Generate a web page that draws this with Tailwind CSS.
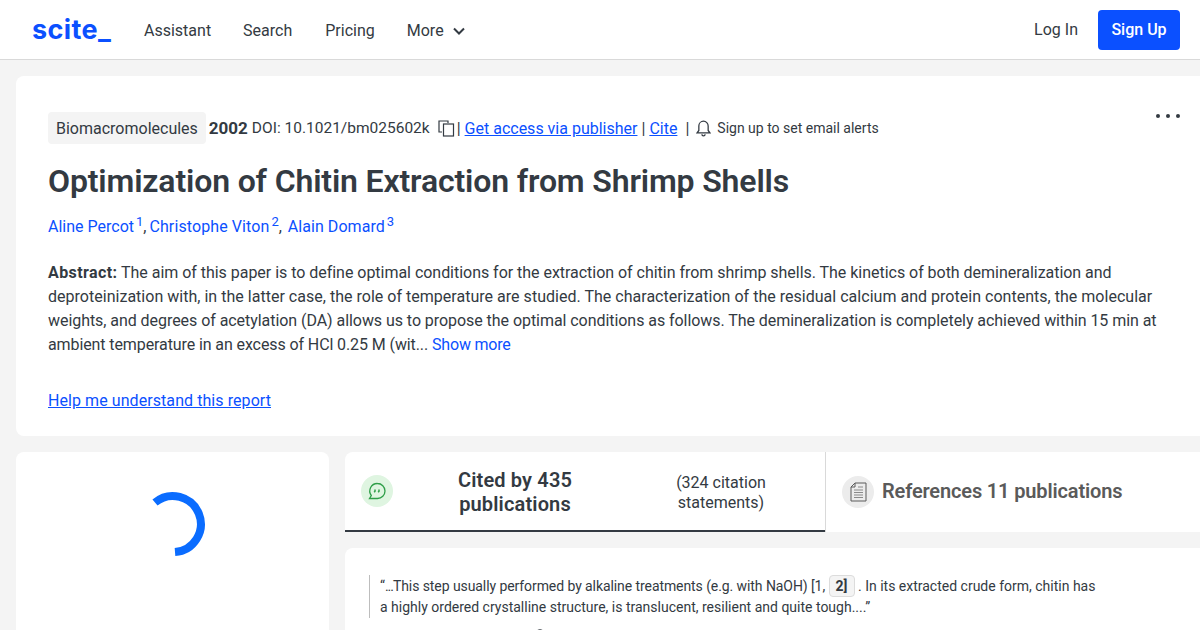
<!DOCTYPE html>
<html lang="en">
<head>
    <meta charset="UTF-8">
    <title>Optimization of Chitin Extraction from Shrimp Shells</title>
    <script src="https://cdn.jsdelivr.net/npm/@tailwindcss/browser@4"></script>
</head>
<body class="bg-[#f4f4f4] font-['Roboto','Noto_Sans',sans-serif] text-[#333a42]">
  <div class="h-[630px] overflow-hidden">
    <!-- header -->
    <header class="h-[60px] bg-white border-b border-[#d9d9d9] flex items-center pl-[32px] pr-[20px]">
        <a class="font-['Inter',sans-serif] font-bold text-[#0b50ff] text-[27px] tracking-[0.4px] w-[112px] leading-none">scite_</a>
        <nav class="flex items-center gap-[32px] text-[16px] pt-[2px]">
            <a>Assistant</a>
            <a>Search</a>
            <a class="ml-[1px]">Pricing</a>
            <a class="flex items-center gap-[9px]">More
                <svg class="w-[12px] h-[8px]" viewBox="0 0 12 8" fill="none" stroke="#333a42" stroke-width="2"><path d="M1 1.500l5 5 5-5"/></svg>
            </a>
        </nav>
        <div class="ml-auto flex items-center gap-[20px] text-[16px]">
            <a>Log In</a>
            <a class="bg-[#0b50ff] text-white font-medium rounded-[4px] h-[40px] w-[82px] flex items-center justify-center">Sign Up</a>
        </div>
    </header>

    <main class="pl-[16px] pt-[16px]">
        <!-- paper card -->
        <section class="relative bg-white rounded-l-[8px] h-[360px] px-[32px] pt-[36px]">
            <div class="flex items-center h-[32px] text-[16px] whitespace-nowrap">
                <span class="bg-[#f4f4f4] rounded-[4px] h-[32px] px-[8px] pt-[1px] flex items-center mr-[3px]">Biomacromolecules</span>
                <b class="font-bold text-[17px] mr-[4px] pt-[1px]">2002</b>
                <span class="text-[15.500px] pt-[1px]">DOI: 10.1021/bm025602k</span>
                <svg class="w-[17px] h-[17px] ml-[8px]" viewBox="0 0 17 17" fill="none" stroke="#333a42" stroke-width="1.200"><path d="M10 3V1H1v11h3"/><rect x="5.500" y="4" width="10" height="12"/></svg>
                <span class="ml-[2px] mr-[4px] pt-[1px]">|</span>
                <a class="text-[#0b50ff] underline pt-[1px]">Get access via publisher</a>
                <span class="mx-[4px] pt-[1px]">|</span>
                <a class="text-[#0b50ff] underline pt-[1px]">Cite</a>
                <span class="ml-[8px] pt-[1px]">|</span>
                <svg class="w-[15px] h-[18px] ml-[7px]" viewBox="0 0 14 17" fill="none" stroke="#333a42" stroke-width="1.200"><path d="M1 13h12l-1.600-2.200V6.500a4.400 4.400 0 0 0-8.800 0v4.300z"/><path d="M5.500 14.500a1.500 1.500 0 0 0 3 0"/></svg>
                <span class="ml-[6px] text-[14px]">Sign up to set email alerts</span>
            </div>
            <div class="absolute right-[20px] top-[38px] flex gap-[6px]">
                <i class="w-[4px] h-[4px] rounded-full bg-[#333a42]"></i>
                <i class="w-[4px] h-[4px] rounded-full bg-[#333a42]"></i>
                <i class="w-[4px] h-[4px] rounded-full bg-[#333a42]"></i>
            </div>
            <h1 class="mt-[17px] text-[32px] leading-[40px] font-semibold tracking-[-0.15px]">Optimization of Chitin Extraction from Shrimp Shells</h1>
            <p class="mt-[14px] text-[16px] leading-[24px] text-[#0b50ff]">Aline Percot<sup class="text-[13px] ml-[2px]">1</sup><span class="text-[#333a42]">,</span> <span class="ml-[-1px] tracking-[0.1px]">Christophe Viton</span><sup class="text-[13px] ml-[2px]">2</sup><span class="text-[#333a42]">,</span> <span class="ml-[2px] tracking-[0.05px]">Alain Domard</span><sup class="text-[13px] ml-[2px]">3</sup></p>
            <p class="mt-[22px] text-[16px] leading-[24px] w-[1125px]"><span class="tracking-[-0.03px]"><b class="font-bold tracking-[0.4px]">Abstract:</b> The aim of this paper is to define optimal conditions for the extraction of chitin from shrimp shells. The kinetics of both demineralization and</span> <span class="tracking-[0.02px]">deproteinization with, in the latter case, the role of temperature are studied. The characterization of the residual calcium and protein contents, the molecular</span> <span class="tracking-[-0.055px]">weights, and degrees of acetylation (DA) allows us to propose the optimal conditions as follows. The demineralization is completely achieved within 15 min at</span> <span class="tracking-[-0.1px]">ambient temperature in an excess of HCl 0.25 M (wit...</span> <a class="text-[#0b50ff] tracking-[-0.2px]">Show more</a></p>
            <a class="block mt-[32px] text-[16px] leading-[24px] text-[#0b50ff] underline tracking-[0.07px]">Help me understand this report</a>
        </section>

        <div class="flex gap-[16px] mt-[16px]">
            <!-- loading panel -->
            <aside class="w-[313px] h-[178px] bg-white rounded-t-[8px] flex justify-center pt-[39px] shrink-0">
                <svg class="w-[66px] h-[66px] ml-[1px]" viewBox="0 0 66 66" fill="none" stroke="#0a6cff" stroke-width="8"><path d="M15 11.500A28 28 0 1 1 35 61"/></svg>
            </aside>

            <div class="flex-1 min-w-0">
                <!-- tabs -->
                <div class="flex h-[80px] bg-white rounded-tl-[8px]">
                    <div class="w-[480px] border-b-2 border-[#333a42] flex items-center pl-[16px]">
                        <span class="w-[32px] h-[32px] rounded-full bg-[#dff5e1] flex items-center justify-center shrink-0">
                            <svg class="w-[20px] h-[20px]" viewBox="0 0 20 20" fill="none" stroke="#2e9e48" stroke-width="1.300"><path d="M10.500 2.500a7.500 7.500 0 0 1 0 15H2.500l1.800-3A7.500 7.500 0 0 1 10.500 2.500z"/><path d="M8 8.500v1.800l-.8 1M12 8.500v1.800l-.8 1" stroke-width="1.500"/></svg>
                        </span>
                        <h2 class="w-[200px] ml-[22px] pt-[2px] text-center text-[20px] leading-[24px] font-semibold tracking-[0.15px]">Cited by 435 publications</h2>
                        <span class="w-[130px] ml-[41px] pt-[4px] text-center text-[16px] leading-[20px]">(324 citation statements)</span>
                    </div>
                    <div class="flex-1 border-l border-[#d9d9d9] flex items-center pl-[16px] text-[#5a5a5a]">
                        <span class="w-[32px] h-[32px] rounded-full bg-[#ececec] flex items-center justify-center shrink-0">
                            <svg class="w-[17px] h-[20px]" viewBox="0 0 17 20" fill="none" stroke="#5a5a5a" stroke-width="1"><path d="M5 1h11v18H1V5z"/><path d="M5 1v4H1"/><path d="M8 5h5M4 8h9M4 10.500h9M4 13h9M4 15.500h9" stroke="#8a8a8a" stroke-width="1.200"/></svg>
                        </span>
                        <h2 class="ml-[8px] mb-[2px] text-[20px] font-semibold tracking-[-0.15px]">References 11 publications</h2>
                    </div>
                </div>
                <!-- citation list -->
                <div class="mt-[16px] h-[82px] bg-white rounded-tl-[8px] pl-[24px] pt-[27px]">
                    <blockquote class="border-l border-[#bdbdbd] pl-[10px] text-[14px] leading-[21px] w-[732px]"><span class="tracking-[-0.08px]">“<span class="tracking-[-1px]">...</span>This step usually performed by alkaline treatments (e.g. with NaOH) [1,</span> <b class="inline-block font-bold bg-[#f4f4f4] border border-[#dcdcdc] rounded-[4px] px-[6px] leading-[20px]">2]</b> . In its extracted crude form, chitin has a highly ordered crystalline structure, is translucent, resilient and quite tough....”</blockquote>
                    <svg class="w-[10px] h-[10px] ml-[166px] mt-[11px]" viewBox="0 0 10 10" fill="none" stroke="#333a42" stroke-width="1.500"><circle cx="5" cy="5" r="4"/></svg>
                </div>
            </div>
        </div>
    </main>
  </div>
</body>
</html>
